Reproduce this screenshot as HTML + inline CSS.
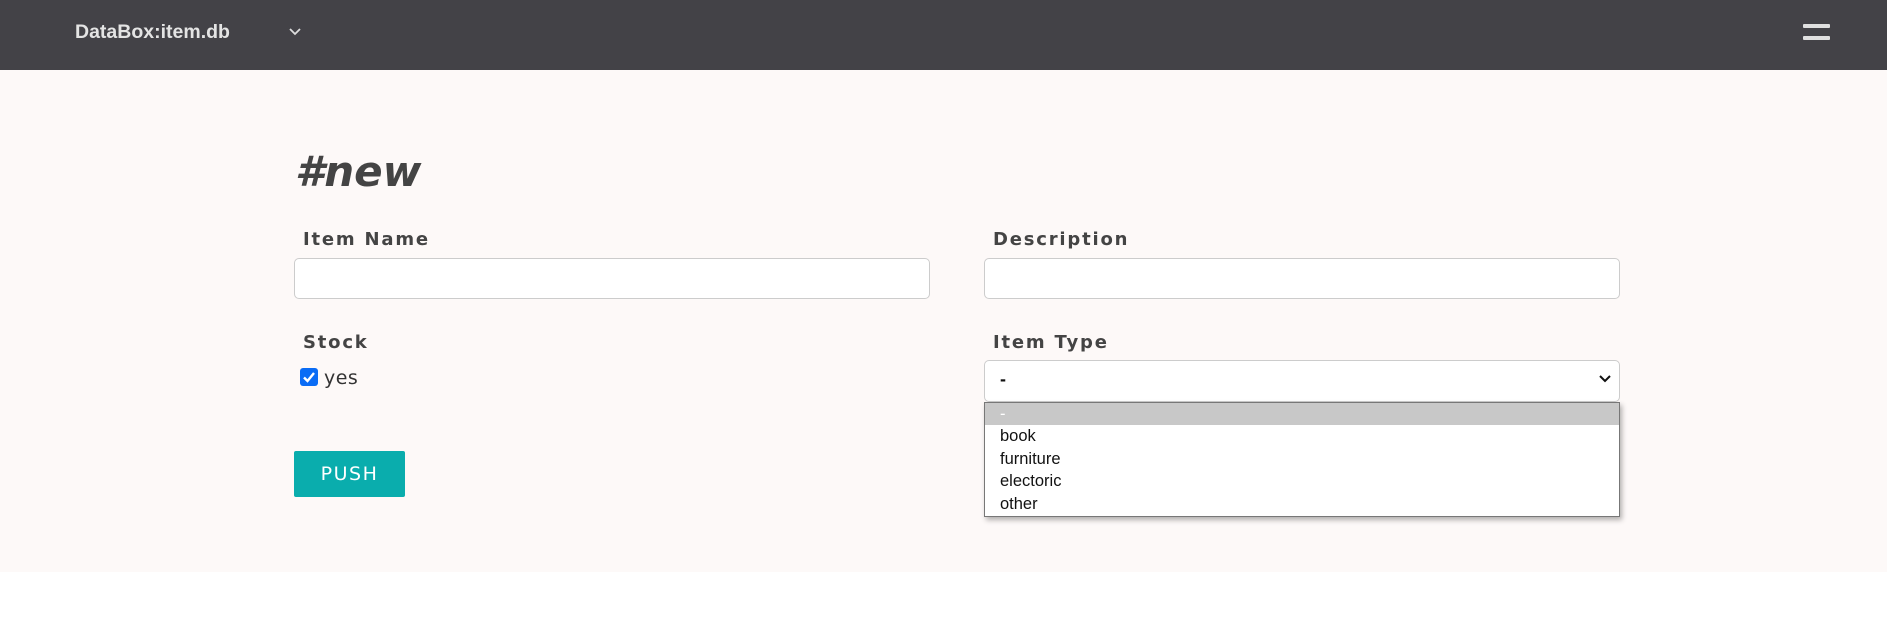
<!DOCTYPE html>
<html><head><style>
*{box-sizing:border-box;margin:0;padding:0}
body{width:1887px;height:619px;background:#fff;font-family:"DejaVu Sans",Verdana,sans-serif;position:relative;overflow:hidden}
.hdr{position:absolute;left:0;top:0;width:1887px;height:70px;background:#434247}
.brand{position:absolute;left:75px;top:21px;font:bold 19.5px "Liberation Sans",Arial,sans-serif;color:#e4e4e4}
.bar{position:absolute;left:1803px;width:27px;height:4px;background:#e0e0e0;border-radius:1px}
.main{position:absolute;left:0;top:70px;width:1887px;height:502px;background:#fdf9f8}
h1{position:absolute;left:295px;top:147px;font:italic bold 42px "DejaVu Sans",sans-serif;color:#444}
.lbl{position:absolute;font-weight:bold;font-size:18px;letter-spacing:1.8px;color:#444}
.inp{position:absolute;height:41px;width:636px;background:#fff;border:1px solid #ccc;border-radius:5px}
.dd{position:absolute;left:984px;top:402px;width:636px;height:115px;background:#fff;border:1px solid #777;box-shadow:2px 3px 5px rgba(0,0,0,.3);font:16.5px "Liberation Sans",Arial,sans-serif;color:#111}
.dd div{height:22.4px;line-height:22.4px;padding-left:15px}
.btn{position:absolute;left:294px;top:451px;width:111px;height:46px;background:#0aadad;color:#fff;font-size:19px;letter-spacing:1.5px;text-align:center;line-height:46px;border-radius:2px}
</style></head><body>
<div class="hdr">
<div class="brand">DataBox:item.db</div>
<svg style="position:absolute;left:288px;top:27px" width="14" height="10" viewBox="0 0 14 10"><path d="M2 2 L7 7 L12 2" stroke="#ddd" stroke-width="1.8" fill="none"/></svg>
<div class="bar" style="top:24px"></div><div class="bar" style="top:36px"></div>
</div>
<div class="main"></div>
<h1>#new</h1>
<div class="lbl" style="left:303px;top:229px">Item Name</div>
<div class="inp" style="left:294px;top:258px"></div>
<div class="lbl" style="left:993px;top:229px">Description</div>
<div class="inp" style="left:984px;top:258px"></div>
<div class="lbl" style="left:303px;top:332px">Stock</div>
<svg style="position:absolute;left:300px;top:368px" width="18" height="18"><rect x="0" y="0" width="18" height="18" rx="3" fill="#0a6cf5"/><path d="M4 9.5 L7.5 13 L14 5" stroke="#fff" stroke-width="2.4" fill="none"/></svg>
<div style="position:absolute;left:324px;top:367px;font-size:19px;color:#333;letter-spacing:.5px">yes</div>
<div class="lbl" style="left:993px;top:332px">Item Type</div>
<div class="inp" style="left:984px;top:360px;height:42px"></div>
<div style="position:absolute;left:1000px;top:369px;font:bold 18px 'Liberation Sans',sans-serif;color:#111">-</div>
<svg style="position:absolute;left:1598px;top:374px" width="14" height="10"><path d="M2 2 L7 7 L12 2" stroke="#111" stroke-width="2" fill="none"/></svg>
<div class="dd">
<div style="background:#c8c8c8;color:#fff">-</div>
<div>book</div><div>furniture</div><div>electoric</div><div>other</div>
</div>
<div class="btn">PUSH</div>
</body></html>
